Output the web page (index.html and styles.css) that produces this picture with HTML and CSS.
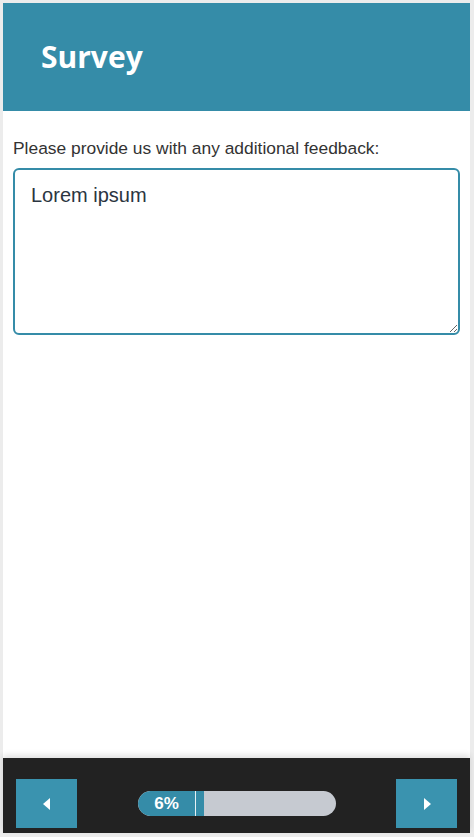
FILE: index.html
```html
<!DOCTYPE html>
<html>
<head>
<meta charset="utf-8">
<link rel="stylesheet" href="styles.css">
</head>
<body>
<div class="frame">
  <header class="header"><h1 class="title">Survey</h1></header>
  <main class="content">
    <label class="label" for="fb">Please provide us with any additional feedback:</label>
    <textarea id="fb" class="answer">Lorem ipsum</textarea>
  </main>
  <footer class="footer">
    <button class="nav" aria-label="Previous">
      <svg width="8" height="12" viewBox="0 0 8 12"><path d="M7 0 L7 12 L0 6 Z" fill="#fff"/></svg>
    </button>
    <div class="progress">
      <div class="fill"><span class="pct">6%</span><span class="tick"></span></div>
    </div>
    <button class="nav" aria-label="Next">
      <svg width="8" height="12" viewBox="0 0 8 12"><path d="M1 0 L1 12 L8 6 Z" fill="#fff"/></svg>
    </button>
  </footer>
</div>
</body>
</html>
```
FILE: styles.css
```css
html, body {
  margin: 0;
  padding: 0;
  background: #fff;
}
.frame {
  box-sizing: border-box;
  width: 474px;
  height: 837px;
  border: 3px solid #ececec;
  border-right-width: 4px;
  border-bottom-width: 4px;
  display: flex;
  flex-direction: column;
  font-family: "Liberation Sans", Arial, sans-serif;
}
.header {
  height: 108px;
  background: #358ca8;
  display: flex;
  align-items: center;
  padding-left: 38px;
  flex-shrink: 0;
}
.title {
  margin: 0;
  font-family: "Open Sans", sans-serif;
  font-weight: 700;
  font-size: 30px;
  color: #fff;
  line-height: 1;
}
.content {
  flex: 1;
  padding: 28px 10px 0 10px;
  display: flex;
  flex-direction: column;
}
.label {
  font-size: 17.4px;
  line-height: 18px;
  color: #333;
}
.answer {
  margin-top: 11px;
  box-sizing: border-box;
  width: 447px;
  height: 167px;
  border: 2px solid #358ca8;
  border-radius: 6px;
  padding: 13px 16px;
  font-family: "Liberation Sans", Arial, sans-serif;
  font-size: 20px;
  line-height: 24px;
  color: #2b3541;
  outline: none;
  resize: vertical;
}
.footer {
  height: 75px;
  flex-shrink: 0;
  background: #222;
  box-sizing: border-box;
  padding: 21px 13px 5px 13px;
  display: flex;
  align-items: center;
  justify-content: space-between;
  box-shadow: 0 -3px 6px rgba(0, 0, 0, 0.12);
}
.nav {
  width: 61px;
  height: 49px;
  border: 0;
  margin: 0;
  padding: 0;
  background: #3a93af;
  display: flex;
  align-items: center;
  justify-content: center;
}
.progress {
  width: 198px;
  height: 25px;
  border-radius: 13px;
  background: #c6cad1;
  overflow: hidden;
  display: flex;
}
.fill {
  width: 66px;
  height: 100%;
  background: #358ca8;
  border-radius: 13px 0 0 13px;
  display: flex;
  align-items: center;
}
.pct {
  width: 56px;
  text-align: center;
  color: #fff;
  font-weight: 700;
  font-size: 17px;
  padding-left: 1px;
}
.tick {
  width: 1.5px;
  height: 100%;
  background: #e6f0f4;
}
```
